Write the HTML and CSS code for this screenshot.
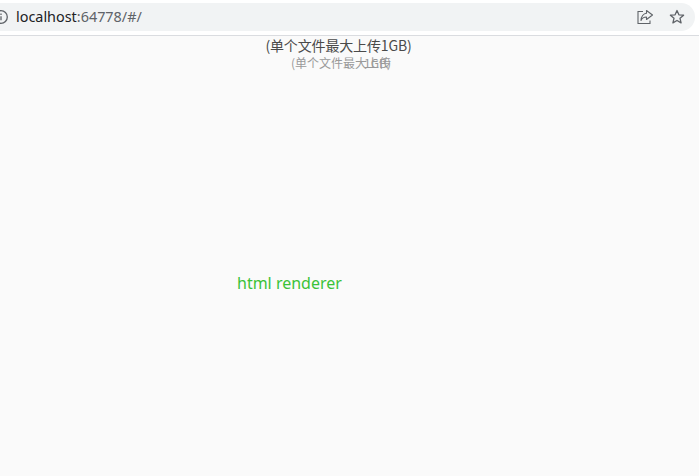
FILE: index.html
```html
<!DOCTYPE html>
<html lang="zh">
<head>
<meta charset="utf-8">
<title>localhost</title>
<link rel="stylesheet" href="styles.css">
</head>
<body>
<header class="toolbar">
  <div class="omnibox">
    <svg class="info" viewBox="0 0 16 16" width="16" height="16"><circle cx="1" cy="8" r="6.300" fill="none" stroke="#5f6368" stroke-width="1.300"/><path d="M1 7.300v4M1 4.500v1.400" stroke="#5f6368" stroke-width="1.300"/></svg>
    <span class="url"><span class="host">localhost</span>:64778/#/</span>
    <span class="spacer"></span>
    <svg class="action" viewBox="0 0 18 18" width="18" height="18"><path d="M7 3.500H2v12h12v-3" fill="none" stroke="#5f6368" stroke-width="1.100"/><path d="M10.500 2.500L16.500 7l-6 4.500V9C8 9 6 10 5 12.500 5 8.500 7.500 5.500 10.500 5.200z" fill="none" stroke="#5f6368" stroke-width="1.100" stroke-linejoin="round"/></svg>
    <svg class="action star" viewBox="0 0 18 18" width="18" height="18"><path d="M9 2.500l1.900 4.300 4.700.4-3.600 3.100 1.100 4.600L9 12.500l-4.100 2.400 1.100-4.600-3.600-3.100 4.700-.4z" fill="none" stroke="#5f6368" stroke-width="1.300" stroke-linejoin="round"/></svg>
  </div>
</header>
<main class="content">
  <p class="limit">(单个文件最大上传1GB)</p>
  <p class="limit-muted"><span class="muted-text">(单个文件最大上传</span><span class="muted-over">1GB)</span></p>
  <div class="stage"><span class="renderer">html renderer</span></div>
</main>
</body>
</html>
```
FILE: styles.css
```css
html, body {
  margin: 0;
  padding: 0;
  height: 100%;
}
body {
  background: #fafafa;
  font-family: "Noto Sans CJK SC", "Liberation Sans", sans-serif;
  overflow: hidden;
}
.toolbar {
  height: 36px;
  padding-top: 3px;
  box-sizing: border-box;
  background: #ffffff;
  border-bottom: 1px solid #dadce0;
}
.omnibox {
  height: 28px;
  width: 695px;
  display: flex;
  align-items: center;
  box-sizing: border-box;
  background: #f1f3f4;
  border-radius: 0 14px 14px 0;
}
.info { flex: none; }
.url {
  font: 14.400px/20px "Noto Sans", "Liberation Sans", sans-serif;
  color: #5f6368;
  white-space: nowrap;
}
.host { color: #202124; }
.spacer { flex: 1; }
.action { flex: none; margin-right: 14px; }
.star { margin-right: 9px; }
.content {
  display: flex;
  flex-direction: column;
  align-items: center;
  padding-right: 22px;
  text-align: center;
}
.limit {
  margin: 0;
  font-size: 14px;
  line-height: 18px;
  color: #4a4a4a;
  white-space: nowrap;
  letter-spacing: -0.15px;
}
.limit-muted {
  margin: 1px 0 0 5px;
  font-size: 12px;
  line-height: 16px;
  color: #999;
  white-space: nowrap;
  display: flex;
}
.muted-over { margin-left: -27px; }
.stage {
  align-self: flex-start;
  width: 100%;
  box-sizing: border-box;
  padding: 199px 0 0 237px;
  text-align: left;
}
.renderer {
  font: 16px/24px "Noto Sans", "Liberation Sans", sans-serif;
  color: #3ac238;
}
```
